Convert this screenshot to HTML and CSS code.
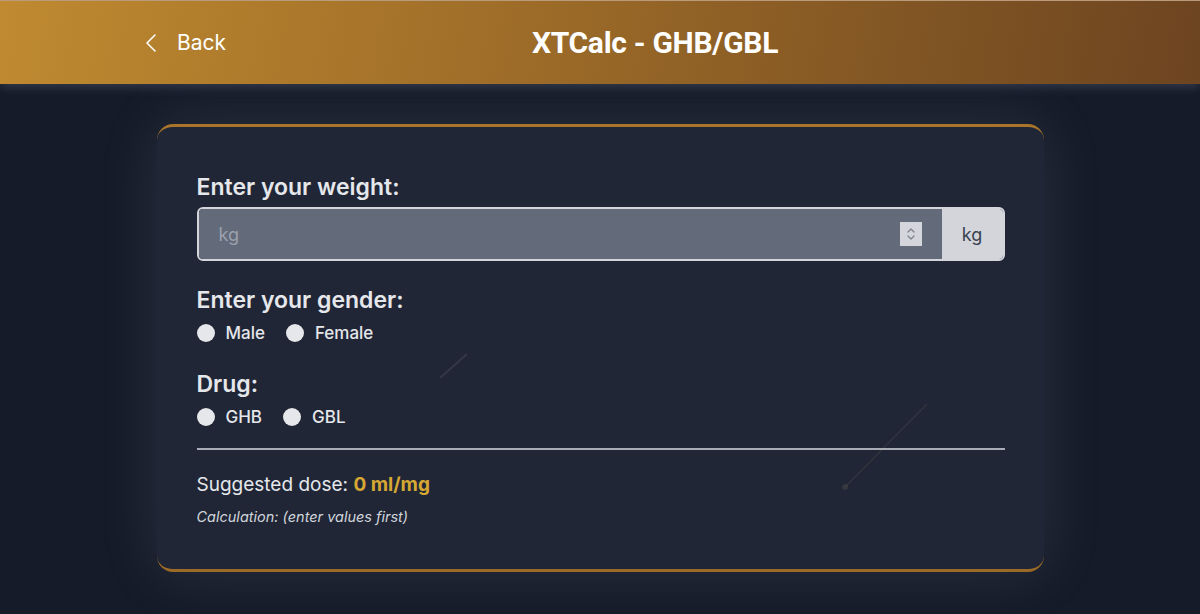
FILE: index.html
```html
<!DOCTYPE html>
<html lang="en">
<head>
  <meta charset="UTF-8">
  <meta name="viewport" content="width=device-width, initial-scale=1.0">
  <title>XTCalc - GHB/GBL</title>
  <link rel="stylesheet" href="styles.css">
</head>
<body>
<header class="topbar">
  <a class="back" href="#">
    <svg class="chev" width="12" height="20" viewBox="0 0 12 20"><path d="M10 2 L2 10 L10 18" fill="none" stroke="#fff" stroke-width="1.6" stroke-linecap="round" stroke-linejoin="round"/></svg>
    <span>Back</span>
  </a>
  <h1 class="title">XTCalc - GHB/GBL</h1>
</header>

<main class="page">
  <div class="card">
    <svg class="streaks" width="887" height="448" viewBox="0 0 887 448">
      <line x1="283" y1="254" x2="310" y2="230" stroke="rgba(200,190,170,0.12)" stroke-width="2"/>
      <line x1="688" y1="363" x2="770" y2="280" stroke="rgba(200,170,120,0.11)" stroke-width="1.2"/>
      <circle cx="688" cy="363" r="3" fill="rgba(200,170,120,0.12)"/>
    </svg>

    <label class="lbl" for="weight">Enter your weight:</label>
    <div class="input-group">
      <div class="field">
        <input id="weight" type="text" placeholder="kg">
        <span class="spin">
          <svg width="12" height="16" viewBox="0 0 12 16"><path d="M3 6 L6 3 L9 6 M3 10 L6 13 L9 10" fill="none" stroke="#7d828c" stroke-width="1.3" stroke-linecap="round" stroke-linejoin="round"/></svg>
        </span>
      </div>
      <span class="addon">kg</span>
    </div>

    <div class="lbl gap">Enter your gender:</div>
    <div class="radios">
      <label><input type="radio" name="gender"> Male</label>
      <label><input type="radio" name="gender"> Female</label>
    </div>

    <div class="lbl gap">Drug:</div>
    <div class="radios">
      <label><input type="radio" name="drug"> GHB</label>
      <label><input type="radio" name="drug"> GBL</label>
    </div>

    <hr class="sep">

    <p class="dose">Suggested dose: <b>0 ml/mg</b></p>
    <p class="calc">Calculation: (enter values first)</p>
  </div>
</main>
</body>
</html>
```

FILE: styles.css
```css
*{
  box-sizing: border-box;
}
body{
  margin: 0;
  background-color: #151b28;
  font-family: Inter, "Noto Sans", sans-serif;
  color: #e5e7eb;
  min-height: 614px;
}
.topbar{
  height: 84px;
  display: flex;
  align-items: center;
  padding: 0 145px;
  background: linear-gradient(100deg, #bf8a30 0%, #9c6b28 45%, #6c4420 100%);
  border-top: 1px solid #b99b7c;
  box-shadow: 0 3px 10px rgba(90, 100, 120, 0.45);
  position: relative;
  z-index: 1;
}
.back{
  width: 110px;
  display: flex;
  align-items: center;
  gap: 20px;
  color: #fff;
  text-decoration: none;
  font-size: 21px;
}
.chev{
  display: block;
}
.title{
  flex: 1;
  margin: 0;
  text-align: center;
  color: #fff;
  font-family: Roboto, "Liberation Sans", sans-serif;
  font-weight: 700;
  font-size: 30px;
  letter-spacing: -0.3px;
}
.page{
  padding-top: 40px;
}
.card{
  position: relative;
  width: 887px;
  height: 448px;
  margin: 0 auto;
  padding: 46px 39px 0 40px;
  background-color: #202636;
  border-top: 3px solid #a8752a;
  border-bottom: 3px solid #9c6a27;
  border-radius: 16px;
  box-shadow: 0 0 60px rgba(190, 200, 225, 0.13);
}
.streaks{
  position: absolute;
  left: 0;
  top: -3px;
  pointer-events: none;
}
.lbl{
  display: block;
  font-size: 23px;
  font-weight: 600;
  line-height: 28px;
  color: #e5e7eb;
}
.lbl.gap{
  margin-top: 25px;
}
.input-group{
  display: flex;
  height: 54px;
  margin-top: 6px;
  border: 2px solid #d3d5db;
  border-radius: 6px;
  overflow: hidden;
}
.field{
  flex: 1;
  position: relative;
  background-color: #636a7a;
}
.field input{
  width: 100%;
  height: 100%;
  border: 0;
  outline: none;
  background: transparent;
  padding: 0 20px;
  font-family: Inter, sans-serif;
  font-size: 18px;
  color: #fff;
}
.field input::placeholder{
  color: #9ca1ad;
}
.spin{
  position: absolute;
  right: 20px;
  top: 13px;
  width: 22px;
  height: 24px;
  background-color: #d4d6dc;
  display: flex;
  align-items: center;
  justify-content: center;
}
.addon{
  width: 61px;
  background-color: #d3d5db;
  color: #374151;
  font-size: 18px;
  display: flex;
  align-items: center;
  justify-content: center;
}
.radios{
  display: flex;
  gap: 21px;
  margin-top: 7px;
  line-height: 24px;
}
.radios label{
  display: flex;
  align-items: center;
  gap: 11px;
  font-size: 17px;
  font-weight: 500;
  color: #e5e7eb;
}
.radios input{
  appearance: none;
  margin: 0;
  width: 18px;
  height: 18px;
  border-radius: 50%;
  background-color: #e6e7ea;
  box-shadow: 0 0 1px rgba(0,0,0,0.4);
}
.sep{
  margin: 19px 0 0;
  border: 0;
  border-top: 2px solid #a7acb6;
}
.dose{
  margin: 21px 0 0;
  font-size: 19px;
  line-height: 27px;
  color: #e5e7eb;
}
.dose b{
  color: #d6a833;
  font-weight: 700;
}
.calc{
  margin: 9px 0 0;
  font-size: 14.5px;
  line-height: 20px;
  font-style: italic;
  color: #d1d5db;
}
```
